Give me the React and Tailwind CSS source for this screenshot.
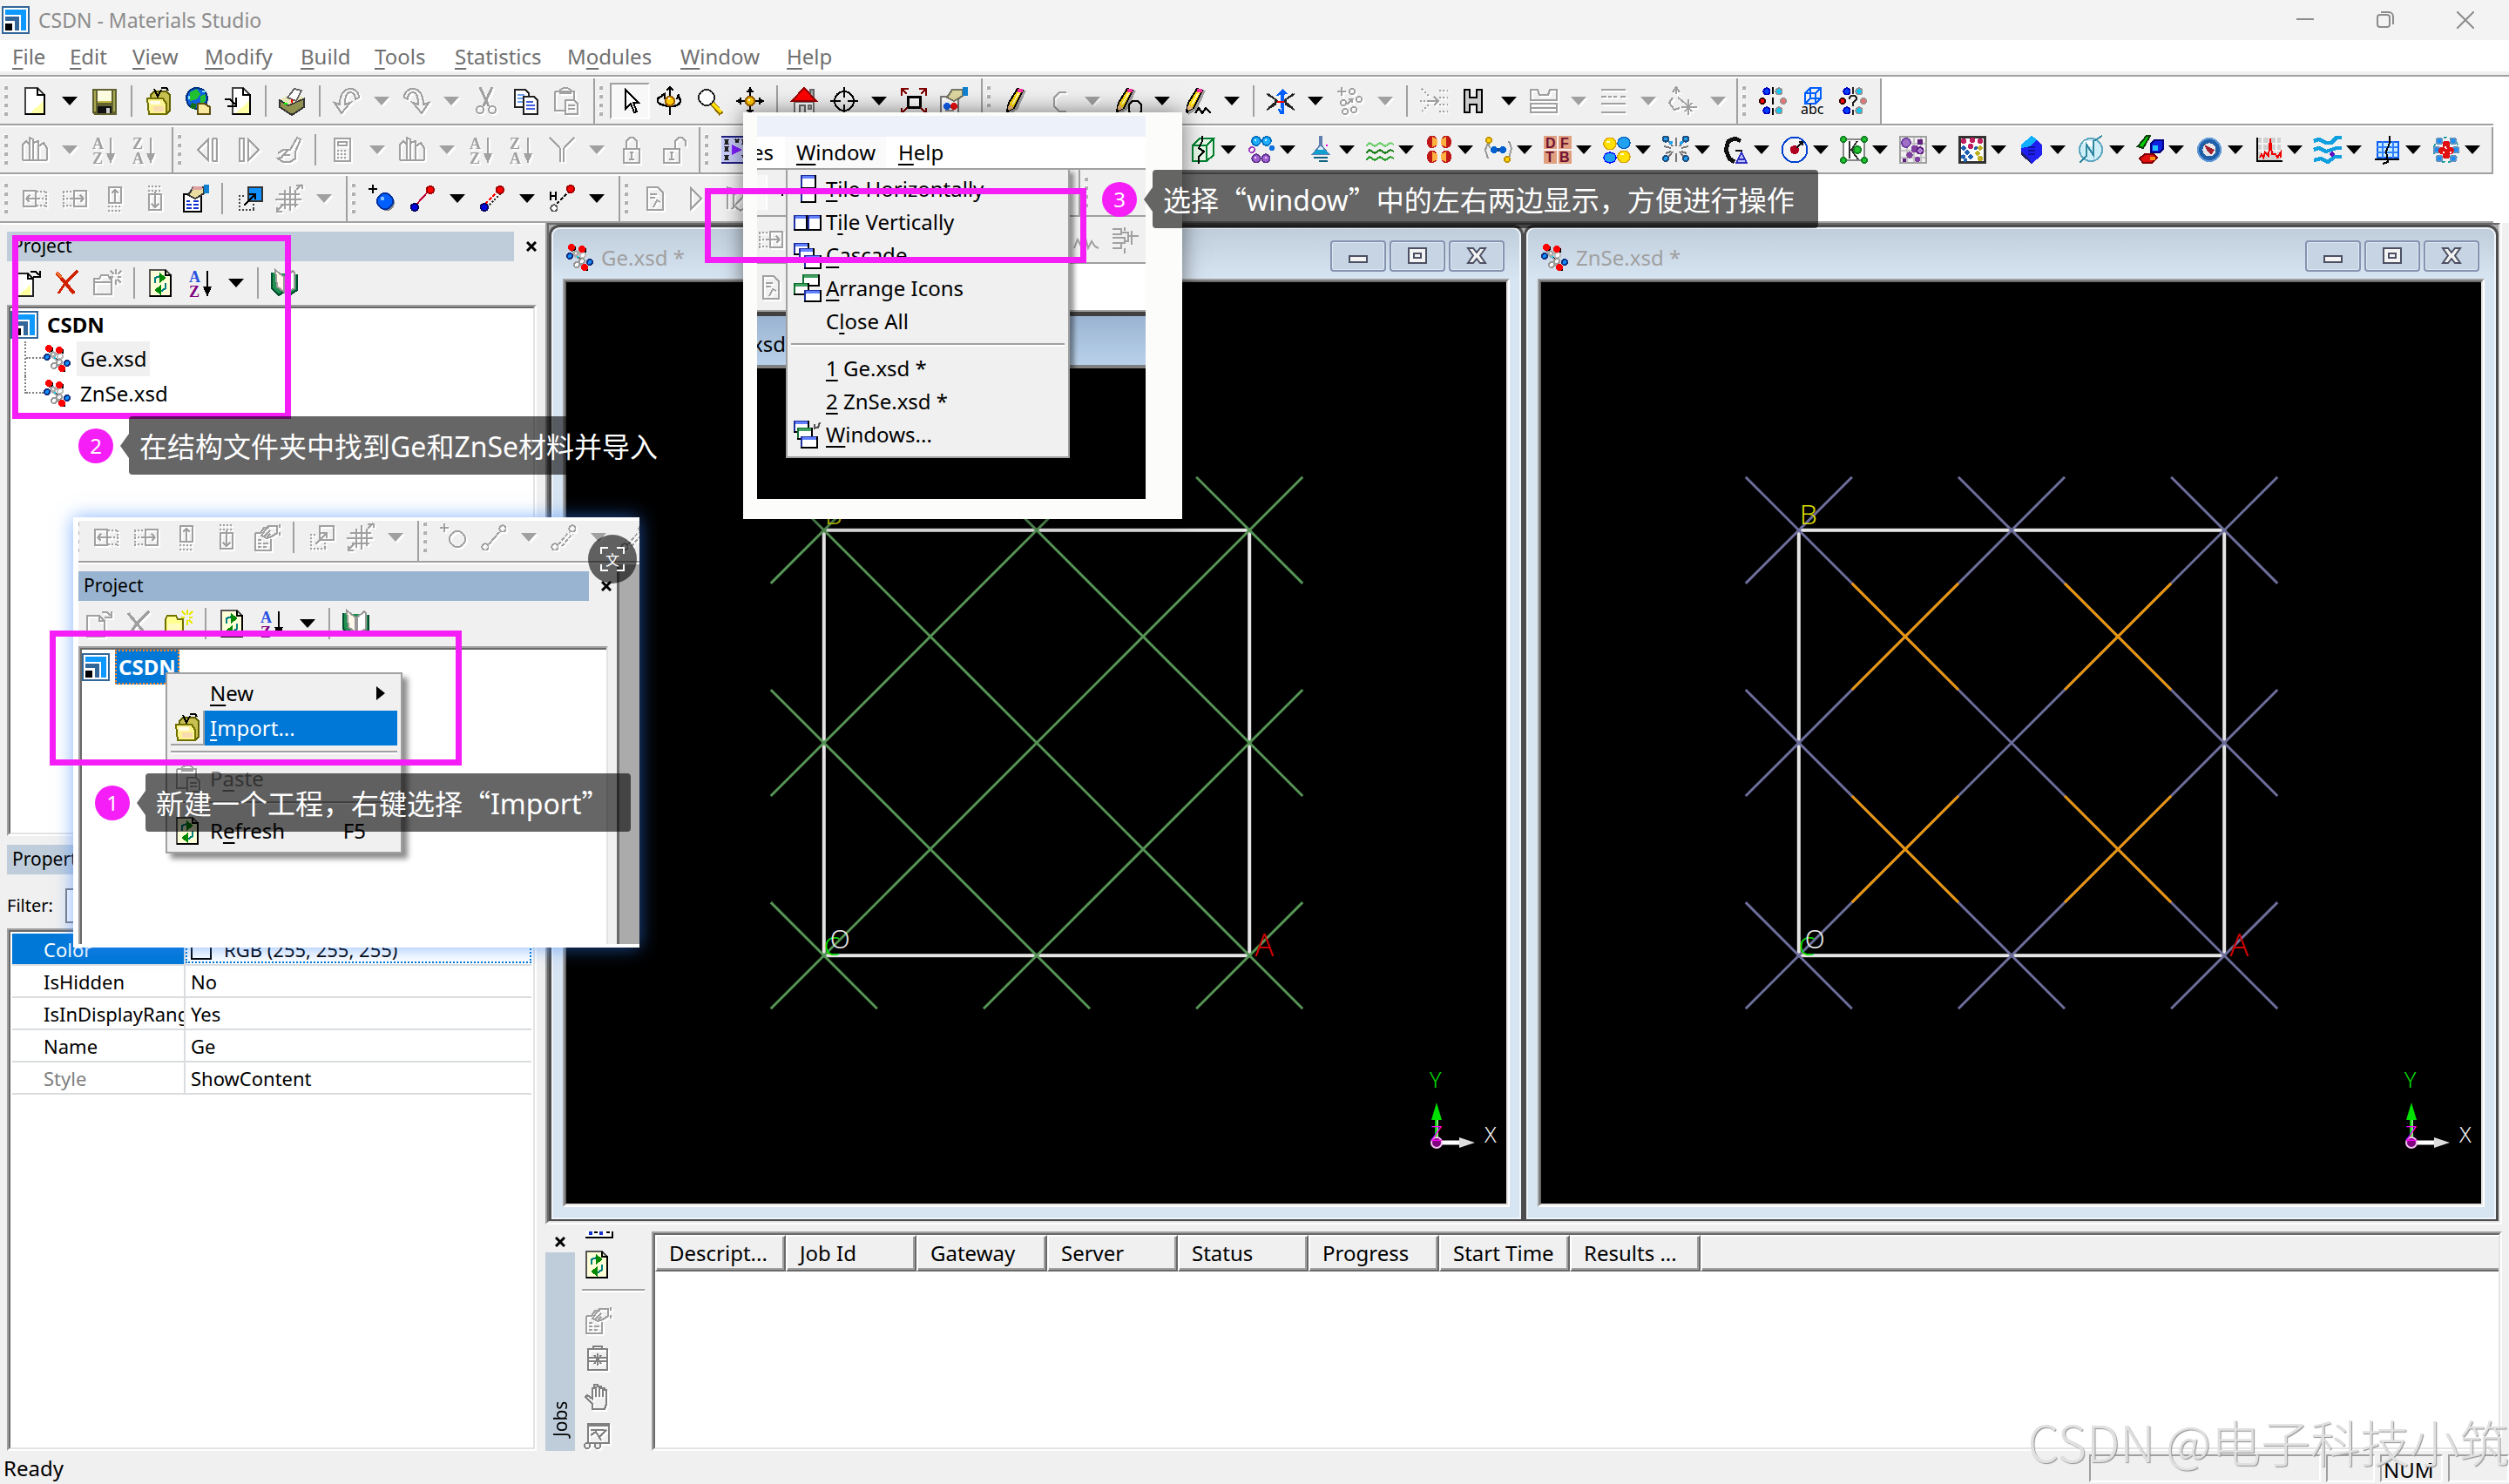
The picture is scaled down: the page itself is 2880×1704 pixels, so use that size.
import React from "react";

/* ---------- icon drawings, all on a 16 x 16 grid ---------- */

const dot = (x, y, r, fill, stroke = "none") => (
  <circle key={x + "-" + y + fill} cx={x} cy={y} r={r} fill={fill} stroke={stroke} strokeWidth="1" />
);
const G = "#a0a0a0";

const pencil = (
  <>
    <path d="M3 14L4 9L9 1L13 2L8 13L3 16Z" fill="#a0a0a0" />
    <path d="M2 14L3 9L8 1L11 2L6 12Z" fill="#ffd800" stroke="#000" />
    <path d="M8 1h3v2h-3z" fill="#ff30a0" />
    <path d="M2 14l1-4 3 2z" fill="#f4c080" />
    <path d="M5 10L9 3" stroke="#fff8a0" />
    <path d="M2 13h1v2h-1z" fill="#000" />
  </>
);
const barsIcon = (
  <path d="M1 14V5l2-2 2 2v9M5 14V1l2 1v12M7 14V4l3-1v11M10 6l3-2 2 3v7M1 14h14" fill="none" stroke={G} />
);
const sortIcon = (a, b, ca, cb, cl) => (
  <>
    <text x="1" y="7.5" fontSize="9" fontWeight="bold" fill={ca} fontFamily="Liberation Serif, serif">{a}</text>
    <text x="1" y="16" fontSize="9" fontWeight="bold" fill={cb} fontFamily="Liberation Serif, serif">{b}</text>
    <path d="M11.500 1v13" stroke={cl} />
    <path d="M9 10h5l-2.500 6z" fill={cl} />
  </>
);
const lockBody = (
  <>
    <rect x="3.500" y="7.500" width="9" height="8" fill="none" stroke={G} />
    <path d="M8 9v4M6.500 13.500h3M7 9.500h2" stroke={G} />
  </>
);
const notePad = (c) => (
  <>
    <path d="M1.500 5.500h3l2-3h3M10.500 9v6.500h-9v-10" fill="none" stroke={c} />
    <path d="M3 9.500h2M3 11.500h2M6 11.500h3M3 13.500h2M6 13.500h2" stroke={c} />
    <path d="M5 7l4-5.500h5v4l-3 2-3 1zM6 8l4-4M8 8l2-2M15.500 .5v2M15.500 5v2" stroke={c} fill="none" />
  </>
);
const folder = (
  <>
    <path d="M3.500 15.500V4.500l2-2h7l2 2v9l-2 2z" fill="#c8c050" stroke="#606000" />
    <path d="M1 6h10l2 9.500H3z" fill="#fdf390" />
    <path d="M1.500 6.500h9l2 3v6h-10z" fill="#fdf390" stroke="#707000" />
    <path d="M3 8h6v2H3z" fill="#fffce8" />
    <path d="M5 11h6v3H5z" fill="#f8dcb0" />
    <path d="M5.500 1l2 4.500 2-4M9.500 .5h3l1 1.500" stroke="#000" fill="none" />
  </>
);
const abc = (q) => (
  <>
    {dot(4.500, 2.500, 1.800, "#0040ff", "#0000c0")}
    {dot(2, 8, 1.600, "#f00", "#300")}
    {dot(4.500, 13.500, 1.800, "#0040ff", "#0000c0")}
    {dot(11.500, 2.500, 1.800, "#10c8f8", "#909090")}
    {dot(14, 8, 1.600, "#f07070", "#a09090")}
    {dot(11.500, 13.500, 1.800, "#10c8f8", "#909090")}
    {q ? (
      <path d="M8 0v4M8 13v3M6 7V6l1-1h2l1 1v1l-2 2v2" stroke="#222" fill="none" />
    ) : (
      <path d="M8 0v4M8 6v4M8 12v4" stroke="#000" />
    )}
  </>
);
const win = (x, y, w, h, c = "#2030a0", t = "#6080ff") => (
  <>
    <path d={`M${x} ${y}h${w}v${h}h-${w}z`} fill="#000" />
    <path d={`M${x} ${y}h${w - 1}v${h - 1}h-${w - 1}z`} fill={c} />
    <path d={`M${x + 1} ${y + 1}h${w - 2}v${h - 2}h-${w - 2}z`} fill="#fff" />
    <path d={`M${x + 1} ${y + 0.500}h${w - 2}v1.500h-${w - 2}z`} fill={t} />
  </>
);
const arrows4 = (c) => (
  <path d="M8 0v16M0 8h16M6 2.500h4M7 1.500h2M6 13.500h4M7 14.500h2M2.500 6v4M1.500 7v2M13.500 6v4M14.500 7v2" stroke={c} />
);

const ICONS = {
  logo: (
    <>
      <path d="M0 0h16v16h-16z" fill="#336699" />
      <path d="M1 1h14v14h-14z" fill="#fff" />
      <path d="M2 2h12v12h-3V5H2z" fill="#0d99ff" />
      <path d="M2 6h8v8h-2.500V8.500H2z" fill="#336699" />
      <path d="M2 10h4v4H2z" fill="#000" />
    </>
  ),
  molecule: (
    <>
      {dot(4, 2.800, 1.700, "#000")}{dot(10, 3.800, 1.700, "#000")}{dot(11, 14, 1.700, "#000")}
      <path d="M3 2l2 5 5 4M9 3l-3 4M8 13l2-3" stroke="#aaa" />
      {dot(5.500, 5.500, 1.300, "#fff", "#aaa")}{dot(9.500, 6.500, 1.500, "#fff", "#bbb")}
      {dot(9, 10, 1.500, "#f4f4f4", "#999")}{dot(6, 12, 1.500, "#fff", "#999")}
      {dot(3, 2, 1.900, "#f00")}{dot(9, 3, 1.900, "#f00")}{dot(2, 7, 1.500, "#1090ff", "#103080")}
      {dot(13.500, 10.500, 1.500, "#1090ff", "#103080")}{dot(10.500, 13.500, 1.900, "#f00")}
      <path d="M6 7h1v1h-1z" fill="#10d0f0" />
    </>
  ),
  new: (
    <>
      <path d="M2.500 .5h7l4 4v11h-11z" fill="#fff" stroke="#444" />
      <path d="M13 8v7h-8z" fill="#ffffa8" />
      <path d="M9.500 .5v4h4M13.500 4v11.500h-11" stroke="#000" fill="none" />
    </>
  ),
  save: (
    <>
      <path d="M1 1h14v15H2L1 15z" fill="#606030" />
      <path d="M4 2h8v6h-8z" fill="#fbfbe0" />
      <path d="M4 8h8v1h-8z" fill="#c0b840" />
      <path d="M4 11h8v4h-8z" fill="#111" />
      <path d="M9 12h2v3h-2z" fill="#ccc" />
      <path d="M2 2h1v12h-1z" fill="#a8a850" />
      <path d="M13 2h1v12h-1z" fill="#a8a850" />
    </>
  ),
  open: folder,
  globe: (
    <>
      {dot(7, 6.500, 6, "#1060e0", "#003080")}
      <path d="M3 3l4-2 2 3-2 3-4 1zM9 5l3-1v4l-3 2z" fill="#20c030" />
      <path d="M4 9l3 1-1 3-3-1z" fill="#107020" />
      <path d="M10 2h2v1h-2zM2 5h1v2H2z" fill="#80e0ff" />
      <path d="M7.500 9.500h4l3 2v4h-7z" fill="#f8e8a0" stroke="#605010" />
    </>
  ),
  importDoc: (
    <>
      <path d="M4.500 .5h6l4 4v11h-10z" fill="#fff" stroke="#444" />
      <path d="M14 8v7h-8z" fill="#ffffa8" />
      <path d="M10.500 .5v4h4M14.500 4v11.500h-10M0 7h3l3 3M6.500 6v5h-5" stroke="#000" fill="none" />
    </>
  ),
  print: (
    <>
      <path d="M.5 7.500l5 3 9-4v5l-7 4.500-7-4.500z" fill="#909050" stroke="#333" />
      <path d="M1 7l6-3 8 2-9 4z" fill="#e8e8b8" />
      <path d="M5 6l4-5 4 1-3 6z" fill="#fff" stroke="#666" />
      <path d="M3 9h2v1h-2z" fill="#0f0" />
      <path d="M7 7h1v2h-1z" fill="#f00" />
    </>
  ),
  undo: <path d="M5 15L1 9l3 1c0-5 2-9 6-9 3 0 5 2 5 5l-2 1c0-2-1-4-3-4s-3 3-3 7l3-1z" fill="#f4f4f4" stroke={G} />,
  redo: <path d="M11 15l4-6-3 1c0-5-2-9-6-9C3 1 1 3 1 6l2 1c0-2 1-4 3-4s3 3 3 7l-3-1z" fill="#f4f4f4" stroke={G} />,
  cut: (
    <>
      <path d="M4.500 0l5 11M11.500 0l-5 11" stroke={G} strokeWidth="1.500" />
      {dot(4.500, 13, 2, "none", G)}{dot(11.500, 13, 2, "none", G)}
    </>
  ),
  copy: (
    <>
      <path d="M1.500 1.500h6l2 2v8h-8z" fill="#fff" stroke="#222" />
      <path d="M3 4.500h4M3 6.500h4M3 8.500h4" stroke="#70a0f0" />
      <path d="M6.500 5.500h6l2 2v8h-8z" fill="#fff" stroke="#222" />
      <path d="M8 8.500h4M8 10.500h5M8 12.500h5" stroke="#4060e0" />
    </>
  ),
  paste: (
    <>
      <path d="M1.500 2.500h11v5M1.500 2.500v11h6M4.500 3.500v-2l2-1h2l2 1v2z" fill="none" stroke={G} />
      <path d="M7.500 7.500h5l2 2v6h-7zM9 10.500h4M9 12.500h4" fill="none" stroke={G} />
    </>
  ),
  cursor: <path d="M5.500 1.500v11l3-3 2 5 1.500-.5-2-5h3z" fill="#fff" stroke="#000" />,
  rotate: (
    <>
      <path d="M8 0v16M6 2l2-2 2 2M4 5C0 6 0 9 3 10l4 1h3c5-1 5-4 2-6M3 5l2-1v3M13 4l-1 3" stroke="#000" fill="none" strokeWidth="1.200" />
      {dot(8, 8, 2.600, "#ffc800", "#a06000")}
      <path d="M7 6h1v1h-1z" fill="#fff" />
    </>
  ),
  zoom: (
    <>
      {dot(6, 6, 4.500, "#fff", "#222")}
      <path d="M9.500 9.500l5 6" stroke="#907000" strokeWidth="3" />
      <path d="M9.500 9.500l5 5" stroke="#ffe000" strokeWidth="1.500" />
    </>
  ),
  move: (<>{arrows4("#000")}{dot(8, 8, 2.600, "#ffc800", "#a06000")}<path d="M7 7h1v1h-1z" fill="#fff" /></>),
  home: (
    <>
      <path d="M11.500 1.500h2v6h-2z" fill="#aaa" stroke="#666" />
      <path d="M2.500 8.500h11v7h-11z" fill="#fff" stroke="#777" />
      <path d="M1 8L8 .5 15 8z" fill="#f00" stroke="#900" />
      <path d="M5.500 10.500h3v5h-3z" fill="#e8e8e8" stroke="#666" />
      <path d="M10.500 10.500h1.500v2h-1.500z" fill="#ddd" stroke="#777" />
    </>
  ),
  target: (<>{dot(8, 8, 5.500, "none", "#000")}<path d="M8 0v6M8 10v6M0 8h6M10 8h6" stroke="#000" /></>),
  fit: (
    <>
      <rect x="4.500" y="5.500" width="7" height="6" fill="#fff" stroke="#000" strokeWidth="1.500" />
      <path d="M1 5V1h4M1 1l3 3M11 1h4v4M15 1l-3 3M1 12v3h4M1 15l3-3M11 15h4v-3M15 15l-3-3" stroke="#800000" fill="none" />
    </>
  ),
  display: (
    <>
      <path d="M.5 5.500h10v10H.5z" fill="#fff" stroke="#777" />
      <path d="M4 6l3-4.500h6v3.500l-3 2-2 1z" fill="#e0d8a0" stroke="#776" />
      <path d="M13 0h3v5h-3z" fill="#1080d0" />
      {dot(4, 11, 2, "#1060f0")}{dot(8, 11, 2, "#f01010")}
      <path d="M3 13.500h5" stroke="#999" />
    </>
  ),
  pencil,
  cShape: <path d="M13 3H9L6 6v5l3 3h4" fill="none" stroke={G} />,
  pencilRing: (<>{pencil}<path d="M9 10l2-2h3l2 2v4l-2 2h-3l-2-2z" fill="none" stroke="#000" /></>),
  pencilChain: (<>{pencil}<path d="M7 15l2-3 2 3 2-3 3 3" fill="none" stroke="#000" /></>),
  cleave: (
    <>
      <path d="M0 4l5 3v3l-5 3M1 4l5 4-5 4M16 4l-5 3v3l5 3M15 4l-5 4 5 4" stroke="#222" fill="none" />
      <path d="M9 3v9" stroke="#0060ff" strokeWidth="1.800" />
      <path d="M5 5l4-4 3 3z" fill="#0060ff" />
      <path d="M6 8.500h4" stroke="#f00" />
      <path d="M7 12.500l1 2h1v-3" stroke="#0060ff" strokeWidth="1.500" fill="none" />
    </>
  ),
  plusO: (
    <>
      <path d="M3 0v5M.5 2.500h5M6 10l3-3h-2M9 7v2" stroke={G} fill="none" />
      {dot(9, 2.500, 1.600, "none", G)}{dot(13, 7, 1.600, "none", G)}{dot(4, 9, 1.600, "none", G)}
      {dot(10, 13, 1.600, "none", G)}{dot(5, 14, 1.600, "none", G)}
    </>
  ),
  dotsArrow: (
    <>
      <path d="M1 1l4 4M1 14l4-4M11 2h5M11 6h5M11 10h5M11 14h5M0 8h3" stroke={G} strokeDasharray="1 1.200" />
      <path d="M4 8h6M8 5.500l2.500 2.500L8 10.500" fill="none" stroke={G} />
    </>
  ),
  hydrogen: <path d="M2.500 1.500h3V6h4V1.500h3v13h-3V10h-4v4.500h-3z" fill="#ccc" stroke="#000" />,
  crystal1: <path d="M.5 1.500h4l1 3h5l1-3h4v6h-15zM.5 9.500h15v5h-15zM.5 12h15" fill="none" stroke={G} />,
  lines: <path d="M1 1.500h14M1 5.500h3M5 5.500h2M8 5.500h2M12 5.500h3M1 9.500h14M1 14.500h14" stroke={G} />,
  rotMove: (
    <>
      <path d="M4 0v4M2 3l2-3 2 3M5 6l5 4M2 6l-2 3 3 4 3-1M11 7v9M7 11.500h9M9 9l4 5M13 9l-4 5" fill="none" stroke={G} />
    </>
  ),
  sym1: abc(false),
  sym2: abc(true),
  cubeAbc: (
    <>
      <path d="M3.500 3.500h6v6h-6zM6.500 .5h6v6h-6zM3.500 3.500l3-3M9.500 3.500l3-3M9.500 9.500l3-3M3.500 9.500l3-3" fill="none" stroke="#0060ff" />
      <text x="1" y="15.500" fontSize="8" fontFamily="Noto Sans, sans-serif" fill="#000">abc</text>
    </>
  ),
  bars: barsIcon,
  sortAZ: sortIcon("A", "Z", "#a0a0a0", "#a0a0a0", "#a0a0a0"),
  sortZA: sortIcon("Z", "A", "#a0a0a0", "#a0a0a0", "#a0a0a0"),
  sortColor: sortIcon("A", "Z", "#2850e0", "#800080", "#000"),
  prev: <path d="M8 2L2 8l6 6zM10.500 1.500v13M13 1.500v13h-2.500M13 1.500h-2.500" fill="none" stroke={G} />,
  next: <path d="M8 2l6 6-6 6zM3 1.500h2.500v13H3z" fill="none" stroke={G} />,
  hand: <path d="M2 10l3-2h4l4-7 2 1-3 7v4l-3 2H5l-3-2 3-1M8 8L5 11h4" fill="none" stroke={G} />,
  calc: (
    <>
      <path d="M3.500 1.500h9v13h-9zM5.500 3.500h5v2h-5z" fill="none" stroke={G} />
      <path d="M5 8.500h6M5 10.500h6M5 12.500h6" stroke={G} strokeDasharray="1 1" />
    </>
  ),
  fork: <path d="M1 1l6 6M15 1L9 7M7 7v8M9 7v8" fill="none" stroke={G} />,
  lock: (<>{lockBody}<path d="M5 7V3l2-2h2l2 2v4" fill="none" stroke={G} /></>),
  unlock: (<>{lockBody}<path d="M10 7V3l2-2h2l2 2v3" fill="none" stroke={G} /></>),
  xmatrix: (
    <>
      <path d="M0 0h16v16H0z" fill="#c8ccf8" />
      <path d="M0 0h16v1H0zM0 15h16v1H0z" fill="#202080" />
      <path d="M6 5l6 3-6 3z" fill="#8020ff" />
      <path d="M2 2l2 3M4 2L2 5M2 6l2 3M4 6L2 9M2 11l2 3M4 11l-2 3M8 2l2 2M10 2L8 4M12 2l2 3M14 2l-2 3M12 11l2 3" stroke="#222" />
    </>
  ),
  dashR: (
    <>
      <path d="M7.500 3.500h7v9h-7zM5 8h8M13 8l-2-2M13 8l-2 2" fill="none" stroke={G} />
      <path d="M1 4h6M1 8h3M1 12h6M1.500 4v9" fill="none" stroke={G} strokeDasharray="1 1" />
    </>
  ),
  dashL: (
    <>
      <path d="M1.500 3.500h7v9h-7zM11 8H3M3 8l2-2M3 8l2 2" fill="none" stroke={G} />
      <path d="M9 4h6M12 8h3M9 12h6M14.500 4v9" fill="none" stroke={G} strokeDasharray="1 1" />
    </>
  ),
  dashU: (
    <>
      <path d="M4.500 1.500h7v9h-7zM8 3v7M6 5l2-2 2 2" fill="none" stroke={G} />
      <path d="M4 12.500h8M4 15h8" stroke={G} strokeDasharray="1 1" />
    </>
  ),
  dashD: (
    <>
      <path d="M4.500 5.500h7v9h-7zM8 4v9M6 11l2 2 2-2" fill="none" stroke={G} />
      <path d="M4 1h8M4 3.500h8" stroke={G} strokeDasharray="1 1" />
    </>
  ),
  notes: (
    <>
      <path d="M1.500 5.500h10v10h-10z" fill="#fff" stroke="#000" />
      <path d="M3 9.500h2M7 9.500h3M3 11.500h3M7 11.500h3M3 13.500h3M7 13.500h3" stroke="#1030d0" />
      <path d="M4 6l3-4.500h6v3.500l-3 2-2 1z" fill="#e8dca0" stroke="#333" />
      <path d="M7 1h5v2h-6z" fill="#e0a0a0" />
      <path d="M13 0h3v5h-3z" fill="#1080d0" />
    </>
  ),
  notesDim: notePad(G),
  expand: (
    <>
      <path d="M7.500 1.500h8v8h-8z" fill="#1090ff" stroke="#333" />
      <path d="M5 12l6-6M8 5.500h3.500v3" stroke="#000" fill="none" />
      <path d="M2.500 6v9M2 6.500h4M2 14.500h9M10.500 11v4" stroke="#444" fill="none" strokeDasharray="1 1" />
    </>
  ),
  expandDim: (
    <>
      <path d="M7.500 1.500h8v8h-8zM5 12l6-6M8 5.500h3.500v3" stroke={G} fill="none" />
      <path d="M2.500 6v9M2 6.500h4M2 14.500h9M10.500 11v4" stroke={G} fill="none" strokeDasharray="1 1" />
    </>
  ),
  gridRot: (
    <>
      <path d="M2 5.500h12M0 8.500h15M3 11.500h10M5.500 3v11M8.500 1v14M11.500 3v10" stroke={G} />
      <path d="M12 3l3-3M12 .5h3.500v2M1 15l3-3M1 13v2.500h3" stroke={G} fill="none" />
    </>
  ),
  atomAdd: (
    <>
      {dot(10.500, 10.500, 4.500, "#888")}
      <circle cx="9.500" cy="9.500" r="4.500" fill="#0060ff" stroke="#0030a0" />
      <path d="M2.500 0v5M0 2.500h5" stroke="#000" />
      <path d="M7 7h2v2h-2z" fill="#80c0ff" />
    </>
  ),
  atomDim: (<>{dot(10, 9, 4.500, "none", G)}<path d="M2.500 0v5M0 2.500h5" stroke={G} /></>),
  bond: (<><path d="M4 12l8-9" stroke="#c00030" />{dot(3.500, 13, 2.100, "#0000e0", "#000060")}{dot(12.500, 3, 2.100, "#ff0000", "#a00000")}</>),
  bond2: (<><path d="M4 11l8-8" stroke="#f00" strokeDasharray="2 1" /><path d="M5 13l8-8" stroke="#333" strokeDasharray="1 1" />{dot(3.500, 13, 2.100, "#0000e0", "#000060")}{dot(12.500, 3, 2.100, "#ff0000", "#a00000")}</>),
  bondH: (
    <>
      <path d="M5 11l8-8" stroke="#111" strokeDasharray="2 1" />
      <path d="M1.500 4v5M1 6.500h3M4.500 4v5" stroke="#000" />
      {dot(3.500, 13.500, 1.800, "#fff", "#555")}{dot(13, 2.500, 2.100, "#ff0000", "#a00000")}
    </>
  ),
  bondDim: (<><path d="M5 12l6-7" stroke={G} />{dot(3, 13.500, 1.800, "none", G)}{dot(13, 3, 1.800, "none", G)}</>),
  bond2Dim: (<><path d="M5 12l6-7M7 13l6-7" stroke={G} strokeDasharray="2 1" />{dot(3, 13.500, 1.800, "none", G)}{dot(13, 3, 1.800, "none", G)}</>),
  scriptDim: <path d="M3.500 1.500h6l3 3v10h-9zM5 5.500h4M5 7.500h3M7 13l2-4 2 1" fill="none" stroke={G} />,
  playDim: <path d="M5.500 2l6 6-6 6z" fill="none" stroke={G} />,
  bugDim: <path d="M3.500 1v13M3 2l3 0M7 6l4-3 4 4v5l-4 3-4-3zM6 14l8-9" fill="none" stroke={G} />,
  /* module launchers */
  mCube: (
    <>
      <path d="M2.500 5.500h8v9h-8zM2.500 5.500l4-4h8l-4 4M14.500 2v9l-4 3.500" fill="#e8f8e8" stroke="#008030" />
      <path d="M8 0v3l-2 4 3 2-3 3v4" stroke="#000" fill="none" />
    </>
  ),
  mRing: (
    <>
      {dot(5, 3, 2.400, "#20b0ff", "#0070c0")}{dot(11, 3, 2.400, "#20b0ff", "#0070c0")}{dot(14, 7, 1.500, "#1070e0")}
      {dot(2.500, 8, 1.500, "#fff", "#a040c0")}{dot(5, 13, 2.300, "#a060d0", "#603090")}{dot(10.500, 13, 2.300, "#a060d0", "#603090")}
      <path d="M4 2h1v1h-1zM10 2h1v1h-1z" fill="#c0f0ff" />
      <path d="M4 12h1v1h-1zM10 12h1v1h-1z" fill="#f0d0ff" />
    </>
  ),
  mFlask: (
    <>
      <path d="M7.500 .5h1v5l4 5h-9l4-5z" fill="#d0f0ff" stroke="#6080b0" />
      <path d="M5.500 8h5l2 2.500h-9z" fill="#10a0d0" />
      <path d="M4 12.500h8M7 14.500h5" stroke="#106080" />
      <path d="M11 5h1v1h-1z" fill="#f0f" />
    </>
  ),
  mWave: (
    <>
      <path d="M0 6l2-2 3 2 3-2 3 2 3-2 2 1" stroke="#70d070" fill="none" />
      <path d="M0 10l2-2 3 2 3-2 3 2 3-2 2 1" stroke="#208020" fill="none" />
      <path d="M0 14l2-2 3 2 3-2 3 2 3-2 2 1" stroke="#30a030" fill="none" />
    </>
  ),
  mRed: (
    <>
      {[[4, 3.500], [12, 3.500], [4, 12], [12, 12]].map(([x, y]) => (
        <g key={x + "_" + y}>
          <ellipse cx={x} cy={y} rx="3" ry="3.600" fill="#c01818" />
          <path d={`M${x} ${y - 3}v6l${x < 8 ? 3 : -3}-1.500v-3z`} fill="#ffb040" />
        </g>
      ))}
    </>
  ),
  mH: (
    <>
      <path d="M2 4l-1.500 4 1.500 5M14 3l1.500 4-1.500 6M2 3l1 4" stroke="#999" fill="none" />
      <path d="M5 8h7" stroke="#204080" strokeWidth="2" />
      {dot(2.500, 2.500, 1.600, "#ffd000", "#c09000")}{dot(5.500, 8, 2, "#0060d0")}{dot(10.500, 8, 2, "#0060d0")}{dot(13, 13.500, 1.600, "#ffd000", "#c09000")}
    </>
  ),
  mDftb: (
    <>
      <path d="M0 0h16v16H0z" fill="#e0a080" />
      <path d="M7.500 0h1v16h-1zM0 7.500h16v1H0z" fill="#f8f0f0" />
      <text x="1" y="7" fontSize="8" fontWeight="bold" fill="#701030" fontFamily="Liberation Sans, sans-serif">D</text>
      <text x="9.500" y="7" fontSize="8" fontWeight="bold" fill="#701030" fontFamily="Liberation Sans, sans-serif">F</text>
      <text x="1" y="15" fontSize="8" fontWeight="bold" fill="#701030" fontFamily="Liberation Sans, sans-serif">T</text>
      <text x="9" y="15" fontSize="8" fontWeight="bold" fill="#701030" fontFamily="Liberation Sans, sans-serif">B</text>
    </>
  ),
  mFlower: (
    <>
      <ellipse cx="4" cy="4.500" rx="3.600" ry="3.400" fill="#ffe000" stroke="#d8a000" strokeWidth=".6" />
      <ellipse cx="12" cy="4" rx="3.600" ry="3.200" fill="#20a0f0" stroke="#0060c0" strokeWidth=".6" />
      <ellipse cx="4" cy="12.500" rx="3.600" ry="3" fill="#20a0f0" stroke="#0000ff" strokeWidth=".6" />
      <ellipse cx="12" cy="12" rx="3.600" ry="3.400" fill="#ffe000" stroke="#d8a000" strokeWidth=".6" />
      <path d="M2 3h2v1H2zM10 10h2v1h-2z" fill="#fffbd0" />
    </>
  ),
  mDots: (
    <>
      <path d="M3 2l3 4M8 1v5M13 2l-3 4M1 6l4 1M15 6l-4 1M3 13l3-4M8 10v5M13 13l-3-4M2 10l3-1M14 10l-3-1" stroke="#777" />
      {dot(2, 1.800, 1.500, "#20a0f0", "#205080")}{dot(13.500, 1.800, 1.500, "#20a0f0", "#205080")}{dot(2, 13, 1.500, "#20a0f0", "#205080")}
      {dot(13.500, 13, 1.500, "#20a0f0", "#205080")}{dot(5, 4, 1, "#20a0f0")}{dot(11, 4, 1, "#20a0f0")}
    </>
  ),
  mG: (
    <>
      <path d="M11 3L8 1.500 4 3 2.500 8l2 5 3 2" fill="none" stroke="#111" strokeWidth="2.400" />
      <path d="M8 8.500h4" stroke="#111" />
      <path d="M8.500 15.500l3-6 3 6zM10 13.500h3" fill="#c0c0ff" stroke="#3030c0" />
    </>
  ),
  mCircle: (
    <>
      {dot(8, 8, 7.200, "#f4f4f4", "#0040d0")}{dot(8, 8, 2.600, "#b00020")}
      <path d="M9 7l3-3M10.500 3.500h2v2" stroke="#111" fill="none" />
    </>
  ),
  mK: (
    <>
      <path d="M2 2h12v12H2z" fill="#fff" stroke="#888" />
      <path d="M5.500 3v10M10 3L6.500 8l4 5.500" stroke="#333" fill="none" />
      {dot(2, 2, 1.600, "#20c030", "#108020")}{dot(14, 2, 1.600, "#20c030", "#108020")}{dot(2, 14, 1.600, "#20c030", "#108020")}
      {dot(14, 14, 1.600, "#20c030", "#108020")}{dot(10, 8, 2, "#20c030", "#108020")}
    </>
  ),
  mPurple: (
    <>
      <path d="M.5.5h15v15H.5z" fill="#f0f0f0" stroke="#a0a0a0" />
      <path d="M4.500 1v14M8.500 1v14M12.500 1v14M1 4.500h14M1 8.500h14M1 12.500h14" stroke="#c4c4c4" />
      {dot(4, 4, 2.400, "#a070c8", "#7040a0")}{dot(9, 7.500, 2.200, "#8040a0")}{dot(12, 3.500, 1.700, "#602080")}{dot(12, 8.500, 1.800, "#b080d8", "#602080")}
      {dot(6, 11, 1.800, "#8040a0")}{dot(3, 14, 1.200, "#602080")}{dot(10.500, 13.500, 1.600, "#8040a0")}
    </>
  ),
  mConfetti: (
    <>
      <path d="M.8.8h14.400v14.400H.8z" fill="#fff" stroke="#333" strokeWidth="1.400" />
      {dot(3, 3, 1.600, "#c02060")}{dot(8, 2.500, 1.600, "#c02060")}{dot(12.500, 3, 1.600, "#c02060")}{dot(7, 6, 1.500, "#c02060")}
      {dot(3, 7, 1.300, "#2060b0")}{dot(5, 9.500, 1.400, "#2060b0")}{dot(2.800, 12, 1.300, "#2060b0")}{dot(7, 12, 1.400, "#2060b0")}
      {dot(12.500, 7, 1.300, "#c0b020")}{dot(11, 10, 1.400, "#c0b020")}{dot(12.500, 13, 1.600, "#c0b020")}
      {dot(4, 14, 1, "#2060b0")}{dot(10, 7, 1, "#2060b0")}
    </>
  ),
  mGem: (
    <>
      <path d="M8 0l6 5v6l-6 5-6-5V5z" fill="#2020f0" />
      <path d="M8 0l3 2-4 4-5 1V5z" fill="#10b0ff" />
      <path d="M2 9l5 5 1 2-6-5z" fill="#202060" />
      <path d="M6 6.500h4M6 8.500h4M6 10.500h4" stroke="#1010a0" />
    </>
  ),
  mN: (
    <>
      <circle cx="8" cy="8" r="6.500" fill="#d0eef8" stroke="#60a8c0" />
      <path d="M4 3h6v3H5z" fill="#fff" />
      <path d="M1.500 15.500l4-4V5l4 6V3l5-3" stroke="#3088a0" fill="none" />
    </>
  ),
  mShapes: (
    <>
      <path d="M1 6l5-6h2L4 7z" fill="#00d000" stroke="#104010" />
      <path d="M8.500 4.500l2-2h5v5l-2 2h-5z" fill="#1020e0" stroke="#000080" />
      <path d="M9.500 5.500h3v3h-3z" fill="#20c0ff" />
      <path d="M2 13l3-2.500h5l2 2-3 3H4z" fill="#e01010" stroke="#800000" />
      <path d="M8 12h3v2h-3z" fill="#ff9010" />
    </>
  ),
  mCompass: (
    <>
      {dot(8, 8, 6.500, "#2060a8", "#6098d8")}{dot(8, 8, 3.800, "#e8e8e8")}
      <path d="M5 5l6 3-2 3-2-2z" fill="#a02030" />
    </>
  ),
  mPlot: (
    <>
      <path d="M1 1h14v13H1z" fill="#d0d0d0" />
      <path d="M4.500 1v12M8.500 1v12M12.500 1v12M1 4.500h14M1 8.500h14" stroke="#f4f4f4" />
      <path d="M1.500 1v13M1 14.500h15" stroke="#000" fill="none" />
      <path d="M3 12.500l1-2 1 2 1-3 2 2 1-10 1 9 2 0 1 2 2-3v3" stroke="#f00000" fill="none" />
    </>
  ),
  mStream: (
    <>
      <path d="M0 3l3-1 4 2h3l3-3h3M0 8l3-1 4 2 3-1 3-1h3M0 14l4-1 4 2 4-3h4" stroke="#10a0e0" strokeWidth="2.200" fill="none" />
      {dot(10.500, 10.500, 1.300, "#6010c0")}
    </>
  ),
  mGrid: (
    <>
      <path d="M2.500 3.500h12v9h-12z" fill="#c8ecff" stroke="#1060f0" />
      <path d="M5.500 3v10M11.500 3v10M2 6.500h12M2 9.500h12" stroke="#3080ff" />
      <path d="M1 13.500h14M9.500 0v4l-2 5 1 6-3 1" stroke="#000" fill="none" />
    </>
  ),
  mCluster: (
    <>
      <circle cx="8" cy="8" r="7.200" fill="none" stroke="#20a0a0" strokeDasharray="2 2" />
      {[[4, 3], [12, 3], [2.500, 8], [13.500, 8], [4, 13], [12, 13]].map(([x, y]) => dot(x, y, 1.700, "#1090ff", "#6090c0"))}
      {dot(8, 5, 2.200, "#e01010")}{dot(5.800, 8.500, 2.200, "#e01010")}{dot(10.200, 8.500, 2.200, "#e01010")}{dot(8, 11, 2.200, "#e01010")}
      <path d="M7 6h1v1h-1zM6 9h1v1h-1zM10 9h1v1h-1z" fill="#fff" />
    </>
  ),
  /* project explorer */
  newDoc: (
    <>
      <path d="M1.500 2.500h7l3 3v10h-10z" fill="#fff" stroke="#222" />
      <path d="M10 9v6h-7z" fill="#ffffa0" />
      <path d="M8.500 2.500v3h3M10 1.500h3l2 2M15.500 1v3.500h-4" stroke="#000" fill="none" />
    </>
  ),
  newDocDim: <path d="M1.500 3.500h7l3 3v9h-10zM8.500 3.500v3h3M10 1.500h3l2 2M15.500 1v3.500h-4" fill="none" stroke={G} />,
  del: (<><path d="M2 2l10 12" stroke="#d02000" strokeWidth="2" /><path d="M14 1L7 8l-4 6" stroke="#d02000" strokeWidth="1.500" fill="none" /><path d="M2 2l3 3" stroke="#f08030" /></>),
  delDim: <path d="M2 2l10 12M14 1L7 8l-4 6" stroke={G} strokeWidth="1.700" fill="none" />,
  newFolderDim: <path d="M.5 14.500v-9h3l1-2h4l1 2h1v9zM.5 7.500h10M13 0v3M13 6v3M9.500 4.500h2M14 4.500h2M10 1l2 2M16 1l-2 2M16 8l-2-2" fill="none" stroke={G} />,
  newFolder: (
    <>
      <path d="M.5 15V5.500l1-2h5l1 2h3V15z" fill="#ffff90" stroke="#707000" />
      <path d="M2 8h7v6H2z" fill="#fffcc0" />
      <path d="M13 0v3M13 6v3M9.500 4.500h2M14 4.500h2M10 1l2 2M16 1l-2 2M16 8l-2-2" stroke="#e8e800" />
    </>
  ),
  refresh: (
    <>
      <path d="M1.500 .5h9l3 3v12h-12z" fill="#ffffd8" stroke="#555" />
      <path d="M10.500 .5v3h3M13.500 3v12.500h-12" stroke="#000" fill="none" />
      <path d="M4.500 8V5l3-1M10.500 8v3l-3 2" stroke="#008080" fill="none" />
      <path d="M7 2l4 3-4 3zM8 9l-4 3 4 3z" fill="#008800" />
    </>
  ),
  book: (
    <>
      <path d="M.5 2v9l4 4 3-2 3 2 4.500-3V3" fill="#209050" stroke="#005030" />
      <path d="M2.500 .5l5 4v8.500l-4-3z" fill="#fff8e8" stroke="#999" />
      <path d="M8.500 4.500l4-3.500 1 1v9l-5 2.500z" fill="#fff" stroke="#999" />
    </>
  ),
  /* jobs */
  stepDots: (<><path d="M0 12h15v3H0z" fill="#fff" /><path d="M2 12h2v2H2zM8 12h2v2H8z" fill="#1030d0" /><path d="M5 12h2v1H5zM12 12h2v1h-2zM0 15h16v1H0zM15 12h1v4h-1z" fill="#000" /></>),
  clipDim: <path d="M2.500 2.500h11v12h-11zM5.500 3v-2h5v2M3 7.500h10M3 9.500h10M8 5v7M6 6l4 5M10 6l-4 5" fill="none" stroke="#808080" />,
  handDim: <path d="M5 15v-3L1 8l1-1 3 2V3h1V1h2v1h2v1h2v1h1v8l-1 3zM7 2v6M9 2v6M11 3v5" fill="none" stroke="#808080" />,
  reportDim: (
    <>
      <path d="M2.500 1.500h12v11h-12zM3 2.500h11M4 5h8M4 8l3-2 3 5M9 9l4-4" fill="none" stroke="#808080" />
      {dot(2, 14, 1.600, "#f0f0f0", "#808080")}{dot(8, 14, 1.600, "#f0f0f0", "#808080")}
    </>
  ),
  /* window menu */
  wHoriz: (<>{win(4, 0, 9, 8)}{win(4, 8, 9, 8)}</>),
  wVert: (<>{win(0, 4, 8, 9)}{win(8, 4, 8, 9)}</>),
  wCascade: (<>{win(0, 1, 9, 7)}{win(3, 4, 9, 7)}{win(6, 8, 10, 8)}</>),
  wArrange: (<>{win(5, 0, 10, 7, "#107030", "#40a060")}{win(0, 5, 9, 7, "#107030", "#40a060")}{win(6, 9, 10, 7)}</>),
  wWindows: (<>{win(0, 0, 9, 7)}{win(2, 4, 9, 7, "#107030", "#40a060")}{win(4, 9, 10, 7)}<path d="M12 4h2l1-3M12 2v3" stroke="#555" fill="none" /></>),
};

function Icon({ n, size = "size-8", dim = false }) {
  return (
    <svg viewBox="0 0 16 16" shapeRendering="crispEdges" aria-hidden="true"
      className={`${size} shrink-0 overflow-visible ${dim ? "drop-shadow-[2px_2px_0_#ffffff]" : ""}`}>
      {ICONS[n]}
    </svg>
  );
}

/* ---------- toolbar parts ---------- */

const DIM = new Set(["undo", "redo", "cut", "paste", "cShape", "plusO", "dotsArrow", "crystal1", "lines", "rotMove", "bars", "sortAZ", "sortZA", "prev", "next", "hand", "calc", "fork", "lock", "unlock", "dashL", "dashR", "dashU", "dashD", "notesDim", "expandDim", "gridRot", "atomDim", "bondDim", "bond2Dim", "scriptDim", "playDim", "bugDim", "newDocDim", "delDim", "newFolderDim", "clipDim", "handDim", "reportDim"]);

function Triangle({ dim }) {
  return (
    <svg viewBox="0 0 18 10" className={`h-[10px] w-[18px] ${dim ? "drop-shadow-[2px_2px_0_#ffffff]" : ""}`} aria-hidden="true">
      <path d="M0 0h18L9 10z" fill={dim ? "#a0a0a0" : "#000"} />
    </svg>
  );
}

/* "|" is a divider, "v" a drop-down arrow, "V" a disabled one, "*x" a pressed button */
function Tools({ items }) {
  return items.map((t, i) => {
    if (t === "|") return <span key={i} className="mx-[7px] h-9 w-0.5 shrink-0 bg-[#a0a0a0]" />;
    if (t === "v" || t === "V")
      return (
        <button key={i} type="button" aria-label="More" className="flex h-10 w-[34px] shrink-0 items-center justify-center">
          <Triangle dim={t === "V"} />
        </button>
      );
    const pressed = t[0] === "*";
    const n = pressed ? t.slice(1) : t;
    return (
      <button key={i} type="button" aria-label={n}
        className={`flex h-[42px] w-[46px] shrink-0 items-center justify-center ${pressed ? "border-2 border-[#a0a0a0] border-r-white border-b-white bg-[#f8f8f8]" : ""}`}>
        <Icon n={n} dim={DIM.has(n)} />
      </button>
    );
  });
}

function Grip() {
  return (
    <span className="flex w-[17px] shrink-0 flex-col gap-[6px] pl-[5px]">
      {[0, 1, 2, 3].map((i) => <span key={i} className="size-1 bg-[#b0b0b0] shadow-[-1px_-1px_0_#ffffff]" />)}
    </span>
  );
}

function Bar({ items, tight }) {
  return (
    <div className={`flex shrink-0 items-center border-r-2 border-[#a0a0a0] bg-[#f0f0f0] ${tight ? "pr-1" : "pr-2"}`}>
      <Grip />
      <Tools items={items} />
    </div>
  );
}

function BarRow({ children }) {
  return <div className="mr-[18px] flex h-14 overflow-hidden border-t-2 border-b-2 border-t-white border-b-[#a0a0a0]">{children}</div>;
}

const MODULES = ["mCube", "mRing", "mFlask", "mWave", "mRed", "mH", "mDftb", "mFlower", "mDots", "mG", "mCircle", "mK", "mPurple", "mConfetti", "mGem", "mN", "mShapes", "mCompass", "mPlot", "mStream", "mGrid", "mCluster"];

function Mn({ children, at = 0 }) {
  return (
    <>
      {children.slice(0, at)}
      <span className="underline decoration-2 underline-offset-4">{children[at]}</span>
      {children.slice(at + 1)}
    </>
  );
}

/* ---------- left dock ---------- */

function DockTitle({ color, children }) {
  return (
    <div className="flex h-[34px] items-center">
      <h2 className={`flex h-full flex-1 items-center pl-1.5 text-[21px] ${color}`}>{children}</h2>
      <button type="button" aria-label="Close" className="flex w-[26px] items-center justify-end">
        <svg viewBox="0 0 12 12" className="size-3"><path d="M1 1l10 10M11 1L1 11" stroke="#000" strokeWidth="3" /></svg>
      </button>
    </div>
  );
}

const SUNKEN = "border-2 border-t-[#a0a0a0] border-l-[#a0a0a0] border-r-white border-b-white";
const SUNKEN_IN = "border-2 border-t-[#696969] border-l-[#696969] border-r-[#e3e3e3] border-b-[#e3e3e3] bg-white";

function ProjectTree() {
  return (
    <div className={`${SUNKEN} flex h-[610px] flex-col`}>
      <div className={`${SUNKEN_IN} flex flex-1 flex-col text-[24px]`}>
        <div className="flex h-[38px] items-center gap-2.5 font-bold"><Icon n="logo" />CSDN</div>
        {["Ge.xsd", "ZnSe.xsd"].map((f, i) => (
          <div key={f} className="flex h-10 items-center">
            <span className={`ml-4 w-[22px] self-stretch border-l-2 border-dotted border-[#808080] ${i ? "mb-5" : ""}`}>
              <span className="block h-5 border-b-2 border-dotted border-[#808080]" />
            </span>
            <Icon n="molecule" />
            <span className={`ml-1.5 flex h-10 items-center px-1 ${i ? "" : "bg-[#f0f0f0]"}`}>{f}</span>
          </div>
        ))}
      </div>
    </div>
  );
}

const PROPS = [["IsHidden", "No"], ["IsInDisplayRange", "Yes"], ["Name", "Ge"], ["Style", "ShowContent"]];

function Properties() {
  return (
    <div className="mt-2.5 flex flex-1 flex-col">
      <DockTitle color="bg-[#bfcddb]">Properties</DockTitle>
      <label className="mt-4 mb-1.5 flex h-10 items-center gap-3.5 text-[20px]">
        Filter:
        <select className="h-10 flex-1 border-2 border-[#808080] bg-white px-1 text-[20px]" defaultValue="Fragment">
          <option>Fragment</option>
        </select>
      </label>
      <div className={`${SUNKEN} flex flex-1 flex-col`}>
        <div className={`${SUNKEN_IN} flex-1 p-0.5`}>
          <table className="w-full table-fixed border-collapse text-[22px] leading-8">
            <colgroup><col className="w-[198px]" /><col /></colgroup>
            <tbody>
              <tr className="h-9 border-b-2 border-[#dadde0]">
                <th className="border-r-2 border-[#dadde0] bg-[#0078d7] p-0 pl-9 text-left font-normal text-white">Color</th>
                <td className="p-0">
                  <span className="flex h-8 items-center gap-3.5 border-2 border-dotted border-[#0078d7] pl-1">
                    <span className="size-6 border-2 border-black bg-white" />RGB (255, 255, 255)
                  </span>
                </td>
              </tr>
              {PROPS.map(([k, v]) => (
                <tr key={k} className="h-[37px] border-b-2 border-[#dadde0]">
                  <th className={`overflow-hidden border-r-2 border-[#dadde0] p-0 pl-9 text-left font-normal whitespace-nowrap ${k === "Style" ? "text-[#808080]" : ""}`}>{k}</th>
                  <td className="p-0 pl-1.5">{v}</td>
                </tr>
              ))}
            </tbody>
          </table>
        </div>
      </div>
    </div>
  );
}

/* ---------- 3D viewers ---------- */

/* cell spans 61..551 on both axes; 490 units per lattice constant */
const at = (v) => 61 + v * 490;
const BONDS = [
  [-0.125, -0.125, 1.125, 1.125], [-0.125, 1.125, 1.125, -0.125],
  [-0.125, 0.625, 0.625, -0.125], [0.375, -0.125, 1.125, 0.625],
  [-0.125, 0.375, 0.625, 1.125], [0.375, 1.125, 1.125, 0.375],
  [-0.125, 0.125, 0.125, -0.125], [0.875, -0.125, 1.125, 0.125],
  [-0.125, 0.875, 0.125, 1.125], [0.875, 1.125, 1.125, 0.875],
];
const CENTERS = [[0.25, 0.25], [0.75, 0.25], [0.25, 0.75], [0.75, 0.75]];

function Lattice({ color, inner }) {
  return (
    <svg viewBox="0 0 612 612" className="w-[610px] overflow-visible" fontFamily="Noto Sans, sans-serif" fontWeight="300">
      <rect x="61" y="61" width="490" height="490" fill="none" stroke="#e4e4e4" strokeWidth="4" />
      {BONDS.map(([a, b, c, d], i) => <line key={i} x1={at(a)} y1={at(b)} x2={at(c)} y2={at(d)} stroke={color} strokeWidth="3" />)}
      {inner && CENTERS.map(([x, y], i) => (
        <path key={i} stroke={inner} strokeWidth="3"
          d={`M${at(x - 0.125)} ${at(y - 0.125)}L${at(x + 0.125)} ${at(y + 0.125)}M${at(x - 0.125)} ${at(y + 0.125)}L${at(x + 0.125)} ${at(y - 0.125)}`} />
      ))}
      <text x="62" y="54" fontSize="32" fill="#d8d800">B</text>
      <text x="61" y="551" fontSize="30" fill="#00e000">C</text>
      <text x="68" y="543" fontSize="30" fill="#e8e8e8">O</text>
      <text x="557" y="552" fontSize="36" fill="#d00000">A</text>
    </svg>
  );
}

function Triad() {
  return (
    <svg viewBox="0 0 100 110" className="absolute right-1 bottom-[50px] w-[100px]" fontFamily="Noto Sans, sans-serif" fontWeight="300">
      <path d="M24 90V60" stroke="#00d000" strokeWidth="4" />
      <path d="M25 90V62" stroke="#fff" strokeWidth="1" />
      <path d="M18 64l6-20 6 20z" fill="#00e000" />
      <path d="M28 90h24" stroke="#fff" strokeWidth="5" />
      <path d="M50 84l18 6-18 6z" fill="#ddd" />
      <circle cx="24" cy="90" r="6" fill="#800080" stroke="#f0c0f0" strokeWidth="2" />
      <text x="17" y="88" fontSize="24" fill="#f0f">Z</text>
      <text x="16" y="27" fontSize="25" fill="#00e000">Y</text>
      <text x="79" y="90" fontSize="25" fill="#f0f0f0">X</text>
    </svg>
  );
}

function MdiButton({ label, children }) {
  return (
    <button type="button" aria-label={label} className="flex h-9 w-16 items-center justify-center rounded border-2 border-[#8593b1] bg-[#c6d4e3] shadow-[inset_0_0_0_1px_#dfe9f3]">
      <svg viewBox="0 0 24 20" className="h-5 w-6" fill="#f4f4f4" stroke="#4c5062" strokeWidth="2">{children}</svg>
    </button>
  );
}

function Viewer({ name, color, inner }) {
  return (
    <section aria-label={name} className="flex flex-1 flex-col rounded-t-xl border-[3px] border-b-2 border-[#4d4d4d] bg-[#d7e4f2] bg-[linear-gradient(#bfcddb,#d7e4f2_59px)] px-[13px] pb-3.5 shadow-[inset_0_0_0_2px_#eef4fa]">
      <header className="flex h-[59px] items-center gap-2 pt-2.5 pl-1">
        <Icon n="molecule" />
        <h2 className="flex-1 text-[24px] text-[#a0a0a0]">{name} *</h2>
        <div className="mr-1.5 -mt-1 flex gap-1">
          <MdiButton label="Minimize"><path d="M2 10h20v7H2z" /></MdiButton>
          <MdiButton label="Maximize"><path d="M2 1h20v17H2zM8 7h8v5H8z" /></MdiButton>
          <MdiButton label="Close"><path d="M2 1h6l4 5 4-5h6l-6 8.500 6 8.500h-6l-4-5-4 5H2l6-8.500z" /></MdiButton>
        </div>
      </header>
      <div className="flex flex-1 border-2 border-t-[#a0a0a0] border-r-white border-b-white border-l-[#a0a0a0]">
        <div className="relative flex flex-1 items-center justify-center border-2 border-t-[#696969] border-r-[#e3e3e3] border-b-[#e3e3e3] border-l-[#696969] bg-black">
          <Lattice color={color} inner={inner} />
          <Triad />
        </div>
      </div>
    </section>
  );
}

/* ---------- jobs ---------- */

const JOB_COLS = ["Descript...", "Job Id", "Gateway", "Server", "Status", "Progress", "Start Time", "Results ..."];

function Jobs() {
  return (
    <div className="flex h-[260px] pt-2">
      <div className="flex w-[34px] flex-col items-center">
        <button type="button" aria-label="Close jobs" className="flex h-6 items-center">
          <svg viewBox="0 0 12 12" className="size-3"><path d="M1 1l10 10M11 1L1 11" stroke="#000" strokeWidth="3" /></svg>
        </button>
        <h2 className="min-h-0 w-[34px] flex-1 rotate-180 bg-[#bfcddb] pt-4 text-[21px] leading-[34px] [writing-mode:vertical-rl]">Jobs</h2>
      </div>
      <div className="ml-2 flex w-[72px] flex-col items-start">
        <span className="flex h-2 shrink-0 items-end overflow-hidden pl-1"><Icon n="stepDots" /></span>
        <button type="button" aria-label="Refresh" className="mt-3.5 ml-0.5 shrink-0"><Icon n="refresh" /></button>
        <span className="mt-3 mb-4 h-1 w-full shrink-0 border-t-2 border-[#a0a0a0] bg-white" />
        {["notesDim", "clipDim", "handDim", "reportDim"].map((n) => (
          <button key={n} type="button" aria-label={n} className="mb-3 ml-0.5 h-8 shrink-0"><Icon n={n} dim /></button>
        ))}
      </div>
      <div className={`${SUNKEN} ml-2 flex flex-1 border-r-[#f0f0f0]`}>
        <div className={`${SUNKEN_IN} flex-1`}>
          <table className="w-full table-fixed border-separate border-spacing-0 text-[24px]">
            <colgroup>{JOB_COLS.map((c) => <col key={c} className="w-[150px]" />)}<col /></colgroup>
            <thead>
              <tr className="h-[42px] bg-[#f0f0f0]">
                {JOB_COLS.map((c) => (
                  <th key={c} className="border-2 border-t-white border-r-[#696969] border-b-[#696969] border-l-white p-0 pl-3.5 text-left leading-9 font-normal whitespace-nowrap shadow-[inset_-2px_-2px_0_#a0a0a0]">{c}</th>
                ))}
                <th className="border-2 border-t-white border-r-0 border-b-[#696969] border-l-white shadow-[inset_0_-2px_0_#a0a0a0]" />
              </tr>
            </thead>
          </table>
        </div>
      </div>
    </div>
  );
}

/* ---------- annotations ---------- */

function La({ children }) {
  return <span className="font-['Noto_Sans',sans-serif]">{children}</span>;
}

function Note({ n, place, width = "", children }) {
  return (
    <div className={`absolute z-30 flex items-center ${place}`}>
      <span className="flex size-10 items-center justify-center rounded-full bg-[#f61ef6] text-[24px] text-white">{n}</span>
      <svg viewBox="0 0 10 28" className="ml-2 h-7 w-2.5" aria-hidden="true"><path d="M10 0v28L0 14z" fill="#000" fillOpacity=".6" /></svg>
      <p className={`flex h-[67px] items-center rounded bg-black/60 px-3 font-['Noto_Sans_CJK_SC',sans-serif] text-[32px] whitespace-nowrap text-white ${width}`}>
        <span>{children}</span>
      </p>
    </div>
  );
}

const ROW3_DIM = [["dashL", "dashR", "dashU", "dashD", "notesDim", "|", "expandDim", "gridRot", "V"], ["atomDim", "bondDim", "V", "bond2Dim", "V", "bond2Dim", "V"]];

function ImportInset() {
  return (
    <div className="absolute top-[594px] left-[84px] z-20 h-[494px] w-[650px] overflow-hidden bg-white pt-1 pb-1 pl-1.5 shadow-[0_0_20px_rgba(50,130,255,0.6)]">
      <div className="flex h-full flex-col overflow-hidden bg-[#f0f0f0]">
        <div className="-mt-2 -ml-2 flex h-14 shrink-0 border-b-2 border-[#a0a0a0]">
          {ROW3_DIM.map((r, i) => <Bar key={i} items={r} />)}
        </div>
        <div className="flex flex-1 border-t-2 border-white">
          <div className="flex w-[612px] flex-col pt-2">
            <DockTitle color="bg-[#99b4d1]">Project</DockTitle>
            <div className="flex h-[52px] shrink-0 items-center">
              <Tools items={["newDocDim", "delDim", "newFolder", "|", "refresh", "sortColor", "v", "|", "book"]} />
            </div>
            <div className="mr-1 flex-1 border-2 border-r-[#e3e3e3] border-b-0 border-t-[#a0a0a0] border-l-[#a0a0a0]">
              <div className="flex h-full items-start gap-1.5 border-t-2 border-l-2 border-[#696969] bg-white">
                <span className="pt-1"><Icon n="logo" /></span>
                <span className="flex h-10 items-center border-2 border-dotted border-[#ff8728] bg-[#0078d7] px-0.5 text-[24px] font-bold text-white">CSDN</span>
              </div>
            </div>
          </div>
          <div className="ml-1.5 flex-1 border-l-[3px] border-[#696969] bg-[#ababab]" />
        </div>
      </div>
      <div role="menu" className="absolute top-[178px] left-[106px] w-[272px] border-2 border-[#a0a0a0] bg-[#f0f0f0] px-1 pt-0.5 pb-1 text-[24px] shadow-[6px_6px_6px_rgba(0,0,0,0.45)]">
        <button type="button" role="menuitem" className="flex h-10 w-full items-center justify-between pr-3.5 pl-[45px]">
          <span><Mn>New</Mn></span>
          <svg viewBox="0 0 10 16" className="h-4 w-2.5"><path d="M0 0l10 8-10 8z" /></svg>
        </button>
        <button type="button" role="menuitem" className="flex h-10 w-full items-center text-white">
          <span className="flex h-10 w-[39px] items-center justify-center border-r-2 border-b-2 border-[#a0a0a0]"><Icon n="open" /></span>
          <span className="flex h-10 flex-1 items-center bg-[#0078d7] pl-1.5"><span><Mn>Import...</Mn></span></span>
        </button>
        <hr className="my-[6px] h-1 border-t-2 border-[#a0a0a0] bg-white" />
        <button type="button" role="menuitem" className="mt-2.5 flex h-9 w-full items-center gap-[9px] pl-1 text-[#808080]"><Icon n="paste" dim /><span><Mn at={1}>Paste</Mn></span></button>
        <hr className="mt-2 mb-2.5 h-1 border-t-2 border-[#a0a0a0] bg-white" />
        <button type="button" role="menuitem" className="flex h-10 w-full items-center gap-[9px] pl-1">
          <Icon n="refresh" /><span><Mn at={1}>Refresh</Mn></span><span className="ml-auto pr-9">F5</span>
        </button>
      </div>
      <button type="button" aria-label="Translate" className="absolute top-5 right-[3px] flex size-14 items-center justify-center rounded-full bg-black/60 text-white">
        <svg viewBox="0 0 28 28" className="size-7" fill="none" stroke="#fff" strokeWidth="2"><path d="M1 8V1h8M19 1h8v7M27 20v7h-8M9 27H1v-7" /></svg>
        <span className="absolute font-['Noto_Sans_CJK_SC',sans-serif] text-[16px]">文</span>
      </button>
    </div>
  );
}

const WINDOW_MENU = [
  ["wHoriz", "Tile Horizontally", 0], ["wVert", "Tile Vertically", 1], ["wCascade", "Cascade", 0], ["wArrange", "Arrange Icons", 0], [null, "Close All", 1],
  null,
  [null, "1 Ge.xsd *", 0], [null, "2 ZnSe.xsd *", 0], ["wWindows", "Windows...", 0],
];

function WindowInset() {
  return (
    <div className="absolute top-[129px] left-[853px] z-20 w-[504px] bg-[#fcfcfa] pt-1 pr-[42px] pb-[23px] pl-4 text-[24px] shadow-[0_0_24px_rgba(0,0,0,0.5)]">
      <div className="flex h-[440px] flex-col overflow-hidden bg-black">
        <div className="h-6 shrink-0 bg-[#edf2fa]" />
        <div className="flex h-[38px] shrink-0 items-center border-b-2 border-[#a0a0a0] bg-white">
          <span className="-ml-1.5 w-[38px]">es</span>
          <span className="flex h-full w-[116px] items-center bg-[#fafafa] pl-[13px]"><span><Mn>Window</Mn></span></span>
          <span className="pl-3.5"><Mn>Help</Mn></span>
        </div>
        <div className="flex h-[54px] shrink-0 items-center border-b-2 border-[#a0a0a0] bg-[#f0f0f0]">
          <span className="mr-3 h-10 w-3 border-r-2 border-white bg-[#f8f8f8]" /><Icon n="move" /><span className="flex-1" />
          <span className="h-full w-0.5 bg-[#a0a0a0]" /><Grip /><span className="w-[58px]" />
        </div>
        <div className="flex h-[54px] shrink-0 items-center border-b-2 border-[#a0a0a0] bg-[#f0f0f0] pr-2">
          <Icon n="dashR" dim /><span className="flex-1" />
          <svg viewBox="0 0 16 16" className="mr-3 size-8" fill="none" stroke="#a0a0a0"><path d="M1 13l2-5 2 4 2-7 2 8 2-4 2 3 2 1" /></svg>
          <svg viewBox="0 0 16 16" className="size-8" fill="none" stroke="#a0a0a0"><path d="M1 2h5v3H1M1 7h7v3H1M1 13h5v-3M6 4h4v5H8M10 6h6M8 1v2M8 13v3M12 3v8" /></svg>
        </div>
        <div className="flex h-[53px] shrink-0 items-center bg-white"><span className="flex h-full w-9 items-center bg-[#f0f0f0]"><Icon n="scriptDim" dim /></span></div>
        <div className="h-[7px] shrink-0 border-t-2 border-[#a0a0a0] bg-[#404040]" />
        <div className="flex h-[60px] shrink-0 items-center border-b-4 border-[#808080] bg-[linear-gradient(#9ab3d1,#b9d1ea)] pt-2"><span className="-ml-1.5">xsd</span></div>
      </div>
      <div role="menu" className="absolute top-16 left-[49px] flex w-[326px] flex-col border-2 border-[#a0a0a0] bg-[#f0f0f0] px-1 pt-[3px] pb-1.5 shadow-[5px_5px_5px_rgba(0,0,0,0.4)]">
        {WINDOW_MENU.map((m, i) =>
          m ? (
            <button key={i} type="button" role="menuitem" className="flex h-[38px] items-center gap-[5px] pl-[3px]">
              {m[0] ? <Icon n={m[0]} /> : <span className="w-8" />}
              <span><Mn at={m[2]}>{m[1]}</Mn></span>
            </button>
          ) : (
            <hr key={i} className="my-[6px] h-1 border-t-2 border-[#a0a0a0] bg-white" />
          )
        )}
      </div>
    </div>
  );
}

/* ---------- page ---------- */

const MENU = [["File", 0, "w-[66px]"], ["Edit", 0, "w-[72px]"], ["View", 0, "w-[83px]"], ["Modify", 0, "w-[110px]"], ["Build", 0, "w-[85px]"], ["Tools", 0, "w-[92px]"], ["Statistics", 0, "w-[129px]"], ["Modules", 1, "w-[130px]"], ["Window", 0, "w-[122px]"], ["Help", 0, ""]];

const PANE = "border-2 border-t-[#a0a0a0] border-r-white border-b-white border-l-[#a0a0a0]";

export default function App() {
  return (
    <div className="relative flex min-h-screen flex-col overflow-hidden bg-[#f0f0f0] font-['Noto_Sans','Noto_Sans_CJK_SC',sans-serif] text-black">
      <header className="flex h-[46px] items-center gap-2.5 bg-[#f3f3f3] pl-0.5">
        <Icon n="logo" />
        <h1 className="flex-1 text-[23px] text-[#8c8c8c]">CSDN - Materials Studio</h1>
        <div className="flex pr-1">
          <button type="button" aria-label="Minimize" className="flex w-[92px] justify-center"><svg viewBox="0 0 20 20" className="size-5"><path d="M0 9h20" stroke="#8c8c8c" strokeWidth="2" /></svg></button>
          <button type="button" aria-label="Restore" className="flex w-[92px] justify-center"><svg viewBox="0 0 20 20" className="size-5" fill="none" stroke="#8c8c8c" strokeWidth="2"><rect x="1" y="4" width="14" height="14" rx="3" /><path d="M5 1h9a5 5 0 015 5v9" /></svg></button>
          <button type="button" aria-label="Close" className="flex w-[92px] justify-center"><svg viewBox="0 0 20 20" className="size-5"><path d="M0 0l20 20M20 0L0 20" stroke="#8c8c8c" strokeWidth="2" /></svg></button>
        </div>
      </header>

      <nav className="flex h-9 items-center bg-white pt-0.5 pl-3.5 text-[24px] text-[#707070]">
        {MENU.map(([t, k, w]) => <button key={t} type="button" className={`shrink-0 text-left ${w}`}><Mn at={k}>{t}</Mn></button>)}
      </nav>
      <div className="h-1.5 border-b-2 border-[#a0a0a0]" />

      <div className="bg-white">
        <BarRow>
          <Bar items={["new", "v", "save", "|", "open", "globe", "importDoc", "|", "print", "|", "undo", "V", "redo", "V", "cut", "copy", "paste"]} />
          <Bar items={["*cursor", "rotate", "zoom", "move", "|", "home", "target", "v", "fit", "display"]} />
          <Bar tight items={["pencil", "cShape", "V", "pencilRing", "v", "pencilChain", "v", "|", "cleave", "v", "plusO", "V", "|", "dotsArrow", "hydrogen", "v", "crystal1", "V", "lines", "V", "rotMove", "V"]} />
          <Bar items={["sym1", "cubeAbc", "sym2"]} />
        </BarRow>
        <BarRow>
          <Bar items={["bars", "V", "sortAZ", "sortZA"]} />
          <Bar items={["prev", "next", "hand", "|", "calc", "V", "bars", "V", "sortAZ", "sortZA", "fork", "V", "lock", "unlock"]} />
          <div className="flex flex-1 items-center border-r-2 border-[#a0a0a0] bg-[#f0f0f0]">
            <Grip />
            <Tools items={["xmatrix"]} />
            <span className="flex-1" />
            {MODULES.map((m) => (
              <span key={m} className="mr-2 flex shrink-0 items-center">
                <button type="button" aria-label={m.slice(1)}><Icon n={m} /></button>
                <button type="button" aria-label="More" className="flex h-10 w-7 items-center justify-center"><Triangle /></button>
              </span>
            ))}
          </div>
        </BarRow>
        <BarRow>
          <Bar items={["dashL", "dashR", "dashU", "dashD", "notes", "|", "expand", "gridRot", "V"]} />
          <Bar items={["atomAdd", "bond", "v", "bond2", "v", "bondH", "v"]} />
          <Bar items={["scriptDim", "playDim", "bugDim", "scriptDim"]} />
        </BarRow>
      </div>

      <main className="flex flex-1">
        <aside className="flex w-[626px] shrink-0 flex-col border-t-2 border-white pt-2 pr-2.5 pl-2">
          <DockTitle color="bg-[#bfcddb]">Project</DockTitle>
          <div className="flex h-[50px] items-center">
            <Tools items={["newDoc", "del", "newFolderDim", "|", "refresh", "sortColor", "v", "|", "book"]} />
          </div>
          <ProjectTree />
          <Properties />
        </aside>
        <div className="flex min-w-0 flex-1 flex-col pr-2">
          <div className="flex flex-1 border-2 border-t-0 border-r-white border-b-white border-l-[#a0a0a0]">
            <div className="flex flex-1 border-2 border-t-[#696969] border-r-[#e3e3e3] border-b-[#e3e3e3] border-l-[#696969] bg-[#ababab]">
              <Viewer name="Ge.xsd" color="#559455" />
              <Viewer name="ZnSe.xsd" color="#6d6d9c" inner="#e8940c" />
            </div>
          </div>
          <Jobs />
        </div>
      </main>

      <footer className="flex h-[38px] items-stretch gap-1.5 pt-1 pb-0.5 pl-1 text-[24px] leading-8">
        <span className="flex-1">Ready</span>
        <span className={`w-[266px] ${PANE}`} />
        <span className={`w-14 ${PANE}`} />
        <span className={`w-[72px] pl-0.5 ${PANE}`}>NUM</span>
        <span className={`w-[70px] ${PANE}`} />
      </footer>

      <div className="absolute top-[270px] left-[14px] z-30 h-[211px] w-[320px] border-[7px] border-[#f61ef6]" />
      <Note n="2" place="top-[478px] left-[90px]"><span>在结构文件夹中找到<La>Ge</La>和<La>ZnSe</La>材料并导入</span></Note>

      <ImportInset />
      <div className="absolute top-[724px] left-[57px] z-30 h-[155px] w-[473px] border-[7px] border-[#f61ef6]" />
      <Note n="1" place="top-[888px] left-[109px]" width="w-[557px]">新建一个工程，右键选择“<La>Import</La>”</Note>

      <WindowInset />
      <div className="absolute top-[216px] left-[809px] z-30 h-[86px] w-[438px] border-[7px] border-[#f61ef6]" />
      <Note n="3" place="top-[195px] left-[1265px]" width="w-[764px]">选择“<La>window</La>”中的左右两边显示，方便进行操作</Note>

      <p className="absolute right-0 bottom-2.5 z-30 font-['Noto_Sans_CJK_SC',sans-serif] text-[57px] leading-[80px] font-light whitespace-nowrap text-[#e0e0e0] [text-shadow:1px_1px_1px_#909090]">CSDN @电子科技小筑</p>
    </div>
  );
}
